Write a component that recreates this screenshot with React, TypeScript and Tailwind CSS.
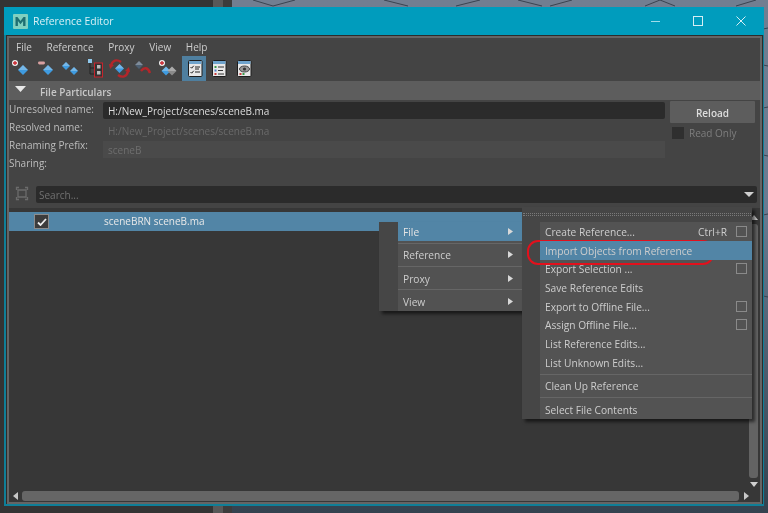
const FONT = "font-['Open_Sans',_'Liberation_Sans',_sans-serif]";

const Diamond = ({ x, y, r = 5, fill = '#3f9be0' }: { x: number; y: number; r?: number; fill?: string }) => (
  <>
    <polygon points={`${x},${y - r} ${x + r},${y} ${x},${y + r} ${x - r},${y}`} fill={fill} />
    <polygon points={`${x},${y - r} ${x + r},${y} ${x - r},${y}`} fill="#ffffff" opacity="0.28" />
  </>
);

const Plus = ({ x, y }: { x: number; y: number }) => (
  <>
    <circle cx={x} cy={y} r="3" fill="#eee" />
    <path d={`M${x - 2} ${y}h4M${x} ${y - 2}v4`} stroke="#c8242c" strokeWidth="1.3" />
  </>
);

const RedArrow = ({ d }: { d: string }) => <path d={d} fill="none" stroke="#b3262a" strokeWidth="2.4" />;

const ToolIcon = ({ children, active }: { children: React.ReactNode; active?: boolean }) => (
  <div className={`w-[24.5px] h-[25px] shrink-0 ${active ? 'bg-[#4f7f9f]' : ''}`}>
    <svg width="24.5" height="25" viewBox="0 0 24.5 25">
      {children}
    </svg>
  </div>
);

const WinIcon = ({ children }: { children: React.ReactNode }) => (
  <>
    <rect x="6.5" y="4.5" width="13.5" height="16" rx="1" fill="#e8e8e8" stroke="#1d1d1d" />
    <rect x="7" y="5" width="12.5" height="3" fill="#6fa3cc" />
    <g transform="translate(1 0)">{children}</g>
  </>
);

const Toolbar = () => (
  <div className="flex h-[25px] pl-[1px] items-center">
    <ToolIcon>
      <Plus x={5} y={7} />
      <Diamond x={13} y={14} />
    </ToolIcon>
    <ToolIcon>
      <rect x="3" y="5.5" width="7" height="3" rx="1.4" fill="#d8a0a0" />
      <Diamond x={13} y={14} />
    </ToolIcon>
    <ToolIcon>
      <Diamond x={7} y={10} r={4} />
      <Diamond x={15} y={15} r={4} />
    </ToolIcon>
    <ToolIcon>
      <rect x="4" y="3" width="4" height="4" fill="#8fc8ec" />
      <path d="M6 7v11h5M6 12h5" stroke="#222" fill="none" />
      <rect x="10.5" y="7" width="8" height="14" fill="#333" stroke="#c8242c" />
      <rect x="13" y="9" width="3.5" height="3.5" fill="#bbb" />
      <rect x="13" y="15" width="3.5" height="3.5" fill="#bbb" />
    </ToolIcon>
    <ToolIcon>
      <RedArrow d="M3 10C4 4 9 3 13 6" />
      <polygon points="1,8 6,9 2,13" fill="#b3262a" />
      <RedArrow d="M20 15C19 21 14 22 10 19" />
      <polygon points="22,16 17,15 21,11" fill="#b3262a" />
      <Diamond x={11.5} y={12.5} r={4.5} />
    </ToolIcon>
    <ToolIcon>
      <Diamond x={6} y={9} r={4} fill="#4d5f72" />
      <RedArrow d="M8 15C11 11 15 11 17 17" />
    </ToolIcon>
    <ToolIcon>
      <Plus x={5} y={7} />
      <Diamond x={9} y={15} r={4.5} />
      <Diamond x={15} y={15} r={4.5} fill="#8a8a8a" />
    </ToolIcon>
    <ToolIcon active>
      <WinIcon>
        <path d="M7.5 11l1.2 1.2 2-2.4M7.5 16l1.2 1.2 2-2.4" stroke="#222" fill="none" />
        <path d="M12 11h5M12 13h4M12 16h5" stroke="#222" />
      </WinIcon>
    </ToolIcon>
    <ToolIcon>
      <WinIcon>
        <rect x="7.5" y="10" width="2" height="2" fill="#3a9a4a" />
        <rect x="7.5" y="13.5" width="2" height="2" fill="#4a7ac8" />
        <rect x="7.5" y="17" width="2" height="2" fill="#c83a3a" />
        <path d="M11 11h6M11 14.5h5M11 18h6" stroke="#333" />
      </WinIcon>
    </ToolIcon>
    <ToolIcon>
      <WinIcon>
        <ellipse cx="12.5" cy="13" rx="5" ry="3" fill="#999" stroke="#444" />
        <circle cx="12.5" cy="13" r="1.6" fill="#333" />
        <rect x="7.5" y="17" width="2" height="2" fill="#c83a3a" />
        <rect x="10.5" y="17" width="2" height="2" fill="#3a9a4a" />
      </WinIcon>
    </ToolIcon>
  </div>
);

const Arrow = () => (
  <svg width="5" height="7" viewBox="0 0 5 7" className="shrink-0 -mt-[2px]">
    <polygon points="0,0 5,3.5 0,7" fill="#d8d8d8" />
  </svg>
);

const SubItem = ({ label, active, arrowed }: { label: string; active?: boolean; arrowed?: boolean }) => (
  <div className={`h-[19px] flex items-center justify-between pl-[5px] pr-[9px] pt-[2px] ${active ? 'bg-[#5285a6] text-[#e4e4e4]' : ''}`}>
    <span>{label}</span>
    {arrowed && <Arrow />}
  </div>
);

const Sep = ({ h = 'h-[5px]' }: { h?: string }) => (
  <div className={`${h} flex items-center`}>
    <div className="h-[1px] w-full bg-[#666666]" />
  </div>
);

const Check = () => <div className="w-[11px] h-[11px] border border-[#8a8a8a] shrink-0" />;

const MenuRow = ({ label, opt, shortcut, active }: { label: string; opt?: boolean; shortcut?: string; active?: boolean }) => (
  <div className={`h-[18.7px] flex items-center pl-[5px] pr-[5px] ${active ? 'bg-[#5285a6]' : ''}`}>
    <span className="flex-1 pt-[2px]">{label}</span>
    {shortcut && <span className="mr-[9px] pt-[2px]">{shortcut}</span>}
    {opt && <Check />}
  </div>
);

const FileMenu = () => (
  <div className="absolute left-[522px] top-[207px] w-[230px] h-[212px] bg-[#535353] flex text-[10.2px] shadow-[3px_3px_3px_rgba(0,0,0,0.55)]">
    <div className="w-[18px] bg-[#464646] shrink-0 -mr-[18px] z-0" />
    <div className="flex-1 flex flex-col z-10">
      <div className="h-[15.5px] bg-[#464646] flex items-start pt-[6px] px-[1px]">
        <div className="h-[3px] w-full border-y border-dotted border-[#7a7a7a]" />
      </div>
      <div className="pl-[18px] flex flex-col">
        <MenuRow label="Create Reference..." shortcut="Ctrl+R" opt />
        <MenuRow label="Import Objects from Reference" active />
        <MenuRow label="Export Selection ..." opt />
        <MenuRow label="Save Reference Edits" />
        <MenuRow label="Export to Offline File..." opt />
        <MenuRow label="Assign Offline File..." opt />
        <MenuRow label="List Reference Edits..." />
        <MenuRow label="List Unknown Edits..." />
        <Sep />
        <MenuRow label="Clean Up Reference" />
        <Sep />
        <MenuRow label="Select File Contents" />
      </div>
    </div>
  </div>
);

const SideMenu = () => (
  <div className="absolute left-[379px] top-[222px] w-[143px] h-[89px] bg-[#525252] flex flex-col text-[10.2px] shadow-[3px_3px_3px_rgba(0,0,0,0.55)] border-l-[19px] border-[#464646]">
    <SubItem label="File" active arrowed />
    <Sep />
    <SubItem label="Reference" arrowed />
    <Sep />
    <SubItem label="Proxy" arrowed />
    <Sep />
    <SubItem label="View" arrowed />
  </div>
);

const WireBackdrop = () => (
  <svg className="absolute inset-0 pointer-events-none" width="768" height="513" viewBox="0 0 768 513">
    <path
      d="M253 0L273 6M295 0L273 6M384 0L408 6M456 6L480 0M518 0L542 6M550 6L572 0M645 6L660 0L675 6M736 6L756 0M763 29L768 28M763 65L768 66M763 108L768 107M763 155L768 156M763 215L768 214M763 296L768 297"
      stroke="#3a4350"
      strokeWidth="1"
      fill="none"
    />
  </svg>
);

export default function App() {
  return (
    <div className={`relative w-[768px] h-[513px] overflow-hidden blur-[0.35px] text-[10px] text-[#cdcdcd] ${FONT}`}>
      {/* what sits behind the window */}
      <div className="flex h-full">
        <div className="w-[213px] bg-[#343434]" />
        <div className="w-[10px] bg-[#585858]" />
        <div className="w-[9px] bg-[#3c3c3c]" />
        <div className="flex-1 bg-[linear-gradient(180deg,#727e91_0%,#6b7a90_40%,#34424f_100%)]" />
      </div>
      <WireBackdrop />

      {/* window */}
      <div className="absolute left-[4px] top-[7px] w-[760px] h-[499px] flex flex-col bg-[#0f7f98] pl-[2px] pr-[1px] pb-[2px]">
        <div className="h-[28px] -ml-[2px] -mr-[1px] bg-[#009cbd] flex items-center shrink-0 pl-[9px] text-white">
          <svg width="15" height="15" viewBox="0 0 15 15" className="shrink-0">
            <rect width="15" height="15" rx="1" fill="#7fd0c0" />
            <path d="M2.5 12V3h2l3 4 3-4h2v9h-2.4V7L7.5 10.2 4.9 7v5z" fill="#1e6f72" />
          </svg>
          <span className="ml-[5px] pt-[1px] text-[10.4px] text-[#d9f0f5]">Reference Editor</span>
          <div className="ml-auto flex items-center text-[#d4eef4]">
            <div className="w-[9px] h-[1px] bg-[#9fdcea] mr-[33px]" />
            <div className="w-[10px] h-[10px] border border-[#d4eef4] mr-[33px]" />
            <svg width="10" height="10" viewBox="0 0 10 10" className="mr-[18px]">
              <path d="M0.5 0.5l9 9M9.5 0.5l-9 9" stroke="#d4eef4" strokeWidth="1" />
            </svg>
          </div>
        </div>

        <div className="flex-1 min-h-0 flex flex-col bg-[#2c2c2c] pt-[1px] pl-[1px] pr-[1px]">
          <div className="flex-1 min-h-0 flex flex-col border-2 border-[#656565] bg-[#444444]">
            <div className="flex gap-[14.7px] h-[18px] items-center pl-[7px] pt-[1px] shrink-0">
              <span>File</span>
              <span>Reference</span>
              <span>Proxy</span>
              <span>View</span>
              <span>Help</span>
            </div>
            <Toolbar />

            <div className="h-[19px] bg-[#5d5d5d] flex items-center shrink-0">
              <svg width="11" height="6" viewBox="0 0 11 6" className="ml-[6px] -mt-[3px]">
                <polygon points="0,0 11,0 5.5,6" fill="#e8e8e8" />
              </svg>
              <span className="ml-[14px] pt-[3px] font-semibold text-[#c8c8c8]">File Particulars</span>
            </div>

            <div className="flex h-[80px] shrink-0">
              <div className="w-[94px] flex flex-col gap-[4px] pt-[1px] text-[#bdbdbd] shrink-0">
                <div className="h-[14px] leading-[14px] mt-[1px]">Unresolved name:</div>
                <div className="h-[14px] leading-[14px]">Resolved name:</div>
                <div className="h-[14px] leading-[14px]">Renaming Prefix:</div>
                <div className="h-[14px] leading-[14px]">Sharing:</div>
              </div>
              <div className="w-[562px] flex flex-col pt-[2px] shrink-0">
                <div className="h-[17px] bg-[#2b2b2b] rounded-[2px] flex items-center px-[5px] pt-[1px] text-[#dcdcdc]">H:/New_Project/scenes/sceneB.ma</div>
                <div className="h-[22px] flex items-center px-[5px] pt-[2px] text-[#6a6a6a]">H:/New_Project/scenes/sceneB.ma</div>
                <div className="h-[17px] bg-[#4a4a4a] flex items-center px-[5px] pt-[1px] text-[#6e6e6e]">sceneB</div>
              </div>
              <div className="flex-1 pl-[5px] pt-[1px] pr-[5px]">
                <div className="h-[22px] bg-[#5d5d5d] flex items-center justify-center pt-[2px] font-semibold text-[#dedede] rounded-[1px]">Reload</div>
                <div className="flex items-center mt-[2px] pl-[2px] text-[#7e7e7e]">
                  <div className="w-[12px] h-[12px] bg-[#2f2f2f]" />
                  <span className="ml-[5px] pt-[1px]">Read Only</span>
                </div>
              </div>
            </div>

            <div className="h-[28px] flex shrink-0 pt-[6px] pl-[6px] pr-[3px]">
              <svg width="14" height="15" viewBox="0 0 14 15" className="shrink-0">
                <path d="M4 1.5H1.5V4M10 1.5h2.5V4M4 13.5H1.5V11M10 13.5h2.5V11M3 4h8v7H3z" stroke="#6b6b6b" strokeWidth="1.3" fill="none" />
              </svg>
              <div className="ml-[7px] flex-1 h-[17px] bg-[#2b2b2b] rounded-[2px] flex items-center justify-between pl-[3px] pr-[3px] text-[#717171]">
                <span className="pt-[1px]">Search...</span>
                <svg width="10" height="5" viewBox="0 0 10 5">
                  <polygon points="0,0 10,0 5,5" fill="#d0d0d0" />
                </svg>
              </div>
            </div>

            {/* reference list */}
            <div className="flex-1 min-h-0 flex flex-col bg-[#373737]">
              <div className="flex-1 min-h-0 flex pt-[4px]">
                <div className="flex-1">
                  <div className="h-[19px] bg-[#5285a6] flex items-center pl-[25px] text-[#e8e8e8]">
                    <div className="w-[15px] h-[15px] bg-[#3c3c3c] border border-[#8c8c8c] flex items-center justify-center shrink-0">
                      <svg width="10" height="8" viewBox="0 0 10 8">
                        <path d="M1 4.5l2.5 2.5L9 1" stroke="#eeeeee" strokeWidth="1.8" fill="none" />
                      </svg>
                    </div>
                    <span className="ml-[55px]">sceneBRN sceneB.ma</span>
                  </div>
                </div>
                <div className="w-[11px] mr-[1px] flex flex-col items-center shrink-0">
                  <svg width="8" height="5" viewBox="0 0 8 5" className="mt-[3px] mb-[4px]">
                    <polygon points="0,5 8,5 4,0" fill="#d0d0d0" />
                  </svg>
                  <div className="flex-1 w-[9px] bg-[#636363] rounded-[3px]" />
                  <svg width="8" height="5" viewBox="0 0 8 5" className="my-[4px]">
                    <polygon points="0,0 8,0 4,5" fill="#d0d0d0" />
                  </svg>
                </div>
              </div>
              <div className="h-[10px] flex items-center pl-[4px] pr-[11px] mb-[1px] shrink-0">
                <svg width="5" height="8" viewBox="0 0 5 8" className="shrink-0">
                  <polygon points="5,0 5,8 0,4" fill="#c8c8c8" />
                </svg>
                <div className="flex-1 h-[10px] mx-[3px] ml-[4px] bg-[#666666] rounded-[3px]" />
                <svg width="5" height="8" viewBox="0 0 5 8" className="shrink-0 ml-[2px]">
                  <polygon points="0,0 5,4 0,8" fill="#c8c8c8" />
                </svg>
              </div>
            </div>
          </div>
        </div>
      </div>

      <SideMenu />
      <FileMenu />

      {/* red marker over the menu row */}
      <div className="absolute left-[527px] top-[240px] w-[187px] h-[25px] border-[2.5px] border-[#e3101c] rounded-[11px]" />
    </div>
  );
}
